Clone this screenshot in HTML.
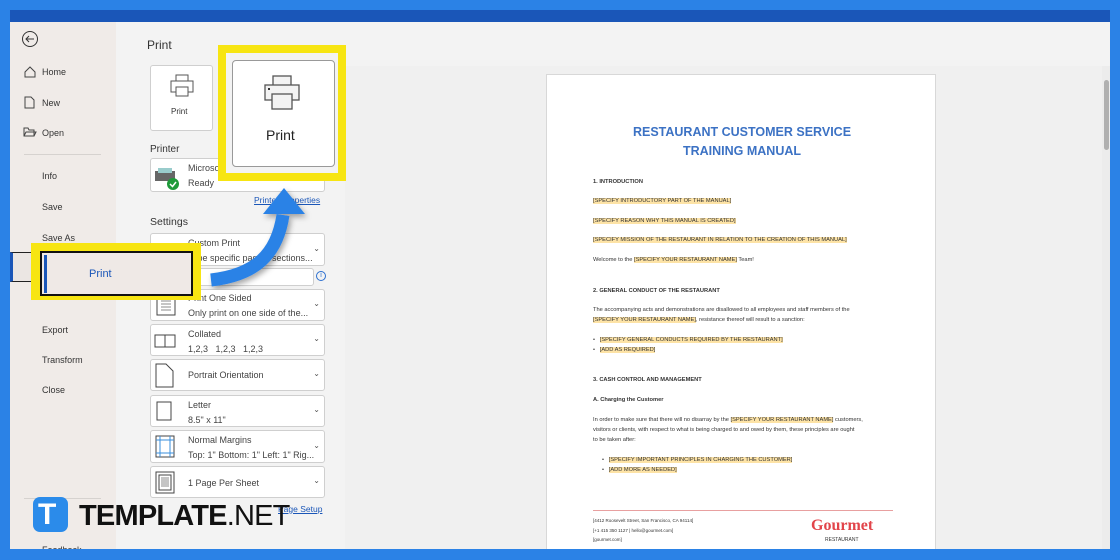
<!DOCTYPE html>
<html><head><meta charset="utf-8"><style>
*{margin:0;padding:0;box-sizing:border-box}
body{width:1120px;height:560px;overflow:hidden;background:#2b82e6;font-family:"Liberation Sans",sans-serif;position:relative;color:#333}
.a{position:absolute}
.side{left:10px;top:22px;width:106px;height:527px;background:#f0ebe8}
.mid{left:116px;top:22px;width:229px;height:527px;background:#f3f3f3}
.prev{left:345px;top:22px;width:765px;height:527px;background:#f0f0f0}
.nav{font-size:9px;color:#333}
.box{position:absolute;left:150px;width:175px;background:#fff;border:1px solid #cfcfcf;border-radius:3px;font-size:9px;color:#444}
.box .t1{position:absolute;left:37px;top:7px}
.box .chev{position:absolute;right:4px;top:50%;margin-top:-6px;font-size:8px;color:#555}
.doc{left:546px;top:74px;width:390px;height:476px;background:#fff;border:1px solid #d8d8d8}
.d{position:absolute;font-size:5.7px;color:#333;white-space:nowrap}
.h{background:#fde3a6}
.b{font-weight:bold}
</style></head><body>
<div class="a" style="left:10px;top:10px;width:1100px;height:12px;background:#1a56b8"></div>
<div class="a side"></div>
<div class="a mid"></div>
<div class="a prev"></div>
<div class="a" style="left:345px;top:22px;width:765px;height:44px;background:#f3f3f3"></div>
<div class="a" style="left:1102px;top:66px;width:8px;height:483px;background:#ececec"></div>
<div class="a" style="left:1104px;top:80px;width:5px;height:70px;background:#b0b0b0;border-radius:3px"></div>

<svg class="a" style="left:21px;top:30px" width="18" height="18"><circle cx="9" cy="9" r="7.5" fill="none" stroke="#333" stroke-width="1"/><path d="M13 9H5M8 6L5 9L8 12" fill="none" stroke="#333" stroke-width="1"/></svg>
<svg class="a" style="left:24px;top:66px" width="12" height="12"><path d="M1 6L6 1L11 6V11H1Z" fill="none" stroke="#444"/></svg>
<div class="a nav" style="left:42px;top:67px">Home</div>
<svg class="a" style="left:24px;top:96px" width="12" height="13"><path d="M1 1H7L10 4V12H1Z" fill="none" stroke="#444"/></svg>
<div class="a nav" style="left:42px;top:98px">New</div>
<svg class="a" style="left:23px;top:127px" width="14" height="11"><path d="M1 1H5L6 3H11V9H1Z M1 9L3 5H13L11 9" fill="none" stroke="#444"/></svg>
<div class="a nav" style="left:42px;top:128px">Open</div>
<div class="a" style="left:24px;top:154px;width:77px;height:1px;background:#d6d2cf"></div>
<div class="a nav" style="left:42px;top:171px">Info</div>
<div class="a nav" style="left:42px;top:202px">Save</div>
<div class="a nav" style="left:42px;top:233px">Save As</div>
<div class="a" style="left:10px;top:252px;width:40px;height:30px;border:1px solid #222;border-left:3px solid #1a56b8;background:#ebe6e3"></div>
<div class="a nav" style="left:42px;top:325px">Export</div>
<div class="a nav" style="left:42px;top:355px">Transform</div>
<div class="a nav" style="left:42px;top:385px">Close</div>
<div class="a" style="left:24px;top:498px;width:77px;height:1px;background:#d6d2cf"></div>
<div class="a nav" style="left:42px;top:545px">Feedback</div>

<div class="a" style="left:147px;top:38px;font-size:12px;color:#333">Print</div>
<div class="a" style="left:150px;top:65px;width:63px;height:66px;background:#fff;border:1px solid #cfcfcf;border-radius:3px"></div>
<svg class="a" style="left:170px;top:74px" width="24" height="24"><rect x="6" y="1" width="12" height="7" fill="#fff" stroke="#555"/><rect x="1" y="7" width="22" height="11" fill="#fff" stroke="#555"/><rect x="6" y="13" width="12" height="9" fill="#fff" stroke="#555"/></svg>
<div class="a" style="left:171px;top:107px;font-size:8px;color:#333">Print</div>
<div class="a" style="left:150px;top:144px;font-size:10px;color:#333">Printer</div>
<div class="box" style="top:158px;height:34px"><svg style="position:absolute;left:2px;top:8px" width="28" height="24"><rect x="2" y="4" width="20" height="10" fill="#666"/><rect x="5" y="1" width="14" height="5" fill="#9cc"/><circle cx="20" cy="17" r="6" fill="#1f9a3a"/><path d="M17 17L19.5 19.5L23 15" stroke="#fff" stroke-width="1.5" fill="none"/></svg><div class="t1" style="top:4px">Microsoft</div><div class="t1" style="top:19px">Ready</div></div>
<div class="a" style="left:254px;top:195px;font-size:8.5px;color:#1a56b8;text-decoration:underline">Printer Properties</div>
<div class="a" style="left:150px;top:216px;font-size:10.5px;color:#333">Settings</div>
<div class="box" style="top:233px;height:33px"><div class="t1" style="top:4px">Custom Print</div><div class="t1" style="top:19px">Type specific pages, sections...</div><span class="chev">⌄</span></div>
<div class="box" style="top:268px;height:18px;width:164px"></div>
<div class="a" style="left:316px;top:271px;width:10px;height:10px;border:1px solid #2b6fd0;border-radius:50%;font-size:7px;color:#2b6fd0;text-align:center;line-height:8px">i</div>
<div class="box" style="top:289px;height:32px"><svg style="position:absolute;left:5px;top:6px" width="22" height="20"><rect x="1" y="1" width="18" height="18" fill="#fff" stroke="#444"/><path d="M5 5H15M5 8H15M5 11H15M5 14H15" stroke="#666" stroke-width=".8"/></svg><div class="t1" style="top:3px">Print One Sided</div><div class="t1" style="top:18px">Only print on one side of the...</div><span class="chev">⌄</span></div>
<div class="box" style="top:324px;height:32px"><svg style="position:absolute;left:3px;top:9px" width="24" height="14"><rect x="1" y="1" width="10" height="12" fill="#fff" stroke="#444"/><rect x="11" y="1" width="10" height="12" fill="#fff" stroke="#444"/></svg><div class="t1" style="top:4px">Collated</div><div class="t1" style="top:19px">1,2,3 &nbsp;&nbsp;1,2,3 &nbsp;&nbsp;1,2,3</div><span class="chev">⌄</span></div>
<div class="box" style="top:359px;height:32px"><svg style="position:absolute;left:4px;top:3px" width="20" height="26"><path d="M1 1H11L18 8V24H1Z" fill="#fff" stroke="#444"/></svg><div class="t1" style="top:10px">Portrait Orientation</div><span class="chev">⌄</span></div>
<div class="box" style="top:395px;height:32px"><svg style="position:absolute;left:5px;top:5px" width="20" height="22"><rect x="1" y="1" width="14" height="18" fill="#fff" stroke="#444"/></svg><div class="t1" style="top:4px">Letter</div><div class="t1" style="top:19px">8.5" x 11"</div><span class="chev">⌄</span></div>
<div class="box" style="top:430px;height:33px"><svg style="position:absolute;left:4px;top:4px" width="22" height="24"><rect x="1" y="1" width="18" height="21" fill="#fff" stroke="#444"/><path d="M5 1V22M15 1V22M1 5H19M1 18H19" stroke="#3a8fdc"/></svg><div class="t1" style="top:4px">Normal Margins</div><div class="t1" style="top:19px">Top: 1" Bottom: 1" Left: 1" Rig...</div><span class="chev">⌄</span></div>
<div class="box" style="top:466px;height:32px"><svg style="position:absolute;left:4px;top:4px" width="22" height="24"><rect x="1" y="1" width="18" height="21" fill="#fff" stroke="#444"/><rect x="4" y="4" width="12" height="15" fill="none" stroke="#444"/><path d="M6 7H14M6 9H14M6 11H14M6 13H14M6 15H14" stroke="#666" stroke-width=".7"/></svg><div class="t1" style="top:11px">1 Page Per Sheet</div><span class="chev">⌄</span></div>
<div class="a" style="left:278px;top:504px;font-size:8.5px;color:#1a56b8;text-decoration:underline">Page Setup</div>

<div class="a" style="left:218px;top:45px;width:128px;height:136px;background:#f7e512"></div>
<div class="a" style="left:226px;top:53px;width:112px;height:120px;background:#f3f3f3"></div>
<div class="a" style="left:232px;top:60px;width:103px;height:107px;background:#fff;border:1px solid #999;border-radius:4px"></div>
<svg class="a" style="left:263px;top:74px" width="38" height="38"><rect x="10" y="2" width="18" height="10" fill="#f3f3f3" stroke="#555" stroke-width="1.3"/><rect x="2" y="11" width="34" height="15" fill="#f3f3f3" stroke="#555" stroke-width="1.3"/><rect x="9" y="20" width="20" height="15" fill="#f3f3f3" stroke="#555" stroke-width="1.3"/><rect x="5" y="14" width="2" height="2" fill="#333"/></svg>
<div class="a" style="left:266px;top:127px;font-size:14px;color:#222">Print</div>

<div class="a" style="left:31px;top:243px;width:170px;height:57px;background:#f7e512"></div>
<div class="a" style="left:40px;top:251px;width:153px;height:45px;background:#efe9e6;border:2px solid #111"></div>
<div class="a" style="left:44px;top:255px;width:3px;height:38px;background:#1a56b8"></div>
<div class="a" style="left:89px;top:268px;font-size:11px;color:#1a56b8">Print</div>

<svg class="a" style="left:195px;top:180px" width="120" height="110"><defs><filter id="s"><feDropShadow dx="2" dy="3" stdDeviation="3" flood-opacity=".35"/></filter></defs><g filter="url(#s)"><path d="M16 100C60 95 82 75 88 35" fill="none" stroke="#2b82e6" stroke-width="13"/><path d="M68 34L89 8L110 34Z" fill="#2b82e6"/></g></svg>

<div class="a doc">
<div class="d b" style="left:0;width:390px;text-align:center;top:48px;font-size:12.5px;color:#3c72c4;line-height:19px">RESTAURANT CUSTOMER SERVICE<br>TRAINING MANUAL</div>
<div class="d b" style="left:46px;top:104px">1. INTRODUCTION</div>
<div class="d" style="left:46px;top:123px"><span class="h">[SPECIFY INTRODUCTORY PART OF THE MANUAL]</span></div>
<div class="d" style="left:46px;top:143px"><span class="h">[SPECIFY REASON WHY THIS MANUAL IS CREATED]</span></div>
<div class="d" style="left:46px;top:162px"><span class="h">[SPECIFY MISSION OF THE RESTAURANT IN RELATION TO THE CREATION OF THIS MANUAL]</span></div>
<div class="d" style="left:46px;top:182px">Welcome to the <span class="h">[SPECIFY YOUR RESTAURANT NAME]</span> Team!</div>
<div class="d b" style="left:46px;top:213px">2. GENERAL CONDUCT OF THE RESTAURANT</div>
<div class="d" style="left:46px;top:232px">The accompanying acts and demonstrations are disallowed to all employees and staff members of the</div>
<div class="d" style="left:46px;top:242px"><span class="h">[SPECIFY YOUR RESTAURANT NAME]</span>, resistance thereof will result to a sanction:</div>
<div class="d" style="left:46px;top:262px">•&nbsp;&nbsp; <span class="h">[SPECIFY GENERAL CONDUCTS REQUIRED BY THE RESTAURANT]</span></div>
<div class="d" style="left:46px;top:272px">•&nbsp;&nbsp; <span class="h">[ADD AS REQUIRED]</span></div>
<div class="d b" style="left:46px;top:302px">3. CASH CONTROL AND MANAGEMENT</div>
<div class="d b" style="left:46px;top:322px">A. Charging the Customer</div>
<div class="d" style="left:46px;top:342px">In order to make sure that there will no disarray by the <span class="h">[SPECIFY YOUR RESTAURANT NAME]</span> customers,</div>
<div class="d" style="left:46px;top:352px">visitors or clients, with respect to what is being charged to and owed by them, these principles are ought</div>
<div class="d" style="left:46px;top:362px">to be taken after:</div>
<div class="d" style="left:55px;top:382px">•&nbsp;&nbsp; <span class="h">[SPECIFY IMPORTANT PRINCIPLES IN CHARGING THE CUSTOMER]</span></div>
<div class="d" style="left:55px;top:392px">•&nbsp;&nbsp; <span class="h">[ADD MORE AS NEEDED]</span></div>
<div style="position:absolute;left:46px;top:435px;width:300px;height:1px;background:#e8a0a0"></div>
<div class="d" style="left:46px;top:443px;font-size:4.5px">[4412 Roosevelt Street, San Francisco, CA 94114]</div>
<div class="d" style="left:46px;top:453px;font-size:4.5px">[+1 415 350 1127 | hello@gourmet.com]</div>
<div class="d" style="left:46px;top:462px;font-size:4.5px">[gourmet.com]</div>
<div class="d b" style="left:264px;top:442px;font-size:16px;color:#e2444a;font-family:'Liberation Serif',serif">Gourmet</div>
<div class="d" style="left:278px;top:462px;font-size:5px">RESTAURANT</div>
</div>

<div class="a" style="left:0;top:549px;width:1120px;height:11px;background:#2b82e6"></div>

<div class="a" style="left:33px;top:497px;width:35px;height:35px;background:#2b8bea;border-radius:7px"></div>
<div class="a" style="left:38px;top:497px;font-size:30px;font-weight:bold;color:#fff;line-height:35px">T</div>
<div class="a" style="left:79px;top:498px;font-size:29px;color:#111;line-height:36px;letter-spacing:-0.8px"><b>TEMPLATE</b>.NET</div>
</body></html>
